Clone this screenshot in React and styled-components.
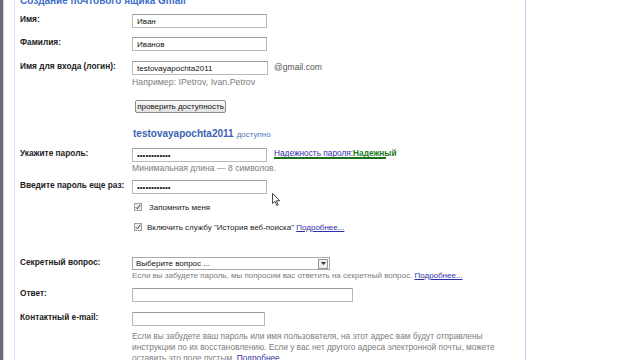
import React from "react";
import styled, { createGlobalStyle } from "styled-components";

const GlobalStyle = createGlobalStyle`
  html, body { margin: 0; padding: 0; background: #ffffff; }
  body { font-family: "Liberation Sans", Arial, sans-serif; overflow: hidden; }
`;

const Page = styled.div`
  position: relative;
  display: flex;
  width: 640px;
  height: 360px;
  overflow: hidden;
  background: #fff;
`;

const LeftBar = styled.div`
  width: 3px;
  flex: none;
  background: #6b6b78;
  border-right: 1px solid #cfd0d8;
`;

const Panel = styled.div`
  margin-left: 10px;
  width: 505px;
  flex: none;
  border-left: 1px solid #dbe6f5;
  border-right: 1px solid #bcd0ec;
  padding-left: 5px;
  display: flex;
  flex-direction: column;
`;

const Title = styled.div`
  margin-top: -5px;
  font-size: 10px;
  line-height: 12px;
  font-weight: bold;
  color: #3d6fc9;
  white-space: nowrap;
`;

const Row = styled.div`
  display: flex;
  align-items: flex-start;
  margin-top: ${(p) => p.$mt || 0}px;
`;

const Label = styled.div`
  width: 112px;
  flex: none;
  font-size: 8.3px;
  line-height: 10px;
  font-weight: bold;
  color: #222;
  white-space: nowrap;
`;

const Field = styled.div`
  display: flex;
  flex-direction: column;
  align-items: flex-start;
`;

const Inline = styled.div`
  display: flex;
  align-items: ${(p) => p.$align || "center"};
`;

const Input = styled.input`
  box-sizing: border-box;
  width: ${(p) => p.$w || 135}px;
  height: 14px;
  margin: 0;
  padding: 0 4px;
  border: 1px solid #b8b8b8;
  border-top-color: #9c9c9c;
  background: #fff;
  font-family: "Liberation Sans", Arial, sans-serif;
  font-size: 8px;
  color: #111;
  outline: none;
`;

const Hint = styled.div`
  margin-top: ${(p) => p.$mt || 0}px;
  font-size: ${(p) => p.$size || 8}px;
  line-height: ${(p) => p.$lh || 10}px;
  color: #7d7d7d;
  white-space: nowrap;
`;

const Link = styled.span`
  color: #2f2fa8;
  text-decoration: underline;
`;

const Domain = styled.span`
  font-size: 8.6px;
  color: #555;
  margin-left: 6px;
  margin-top: 1px;
`;

const CheckButton = styled.div`
  margin-left: 3px;
  box-sizing: border-box;
  width: 91px;
  height: 13px;
  border: 1px solid #8a8a8a;
  border-radius: 2px;
  background: linear-gradient(#fbfbfb, #e2e2e2);
  font-size: 8px;
  line-height: 11px;
  text-align: center;
  color: #111;
  white-space: nowrap;
`;

const Available = styled.div`
  margin-left: 1px;
  font-size: 10px;
  line-height: 12px;
  font-weight: bold;
  color: #3b62b3;
  white-space: nowrap;
`;

const AvailSmall = styled.span`
  font-size: 8px;
  font-weight: normal;
  color: #4f74bd;
  margin-left: 3px;
`;

const Strength = styled.div`
  margin-left: 7px;
  display: flex;
  flex-direction: column;
  align-items: flex-start;
  font-size: 8.3px;
  line-height: 10px;
  white-space: nowrap;
`;

const StrengthValue = styled.span`
  color: #1c7a22;
  font-weight: bold;
`;

const StrengthBar = styled.div`
  width: 112px;
  height: 2px;
  background: #1d6e1d;
  margin-top: -1px;
`;

const CheckLine = styled.div`
  display: flex;
  align-items: center;
  margin-left: 2px;
  height: 10px;
  font-size: 8px;
  color: #222;
  white-space: nowrap;
`;

const Box = styled.span`
  box-sizing: border-box;
  width: 8px;
  height: 8px;
  border: 1px solid #a0a0a0;
  background: #ececec;
  margin-right: ${(p) => p.$gap || 7}px;
  display: flex;
  align-items: center;
  justify-content: center;
`;

const Select = styled.div`
  box-sizing: border-box;
  width: 198px;
  height: 13px;
  border: 1px solid #a8a8a8;
  background: #fff;
  display: flex;
  align-items: center;
  justify-content: space-between;
  padding-left: 3px;
  font-size: 8px;
  color: #111;
`;

const SelectArrow = styled.span`
  box-sizing: border-box;
  width: 10px;
  height: 10px;
  margin-right: 1px;
  border: 1px solid #9a9a9a;
  background: #eee;
  display: flex;
  align-items: center;
  justify-content: center;
`;

const Cursor = styled.svg`
  position: absolute;
  left: 272px;
  top: 193px;
`;

const Tick = () => (
  <svg width="6" height="6" viewBox="0 0 6 6">
    <path d="M0.8 3.2 L2.4 4.8 L5.2 0.8" fill="none" stroke="#444" strokeWidth="1" />
  </svg>
);

export default function App() {
  return (
    <>
      <GlobalStyle />
      <Page>
        <LeftBar />
        <Panel>
          <Title>Создание почтового ящика Gmail</Title>

          <Row $mt={7}>
            <Label>Имя:</Label>
            <Input readOnly defaultValue="Иван" />
          </Row>

          <Row $mt={9}>
            <Label>Фамилия:</Label>
            <Input readOnly defaultValue="Иванов" />
          </Row>

          <Row $mt={10}>
            <Label>Имя для входа (логин):</Label>
            <Field>
              <Inline $align="flex-start">
                <Input readOnly defaultValue="testovayapochta2011" $w={136} />
                <Domain>@gmail.com</Domain>
              </Inline>
              <Hint $mt={2} $size={8.8}>Например: IPetrov, Ivan.Petrov</Hint>
              <Row $mt={13}>
                <CheckButton>проверить доступность</CheckButton>
              </Row>
              <Row $mt={15}>
                <Available>
                  testovayapochta2011<AvailSmall>доступно</AvailSmall>
                </Available>
              </Row>
            </Field>
          </Row>

          <Row $mt={7}>
            <Label>Укажите пароль:</Label>
            <Field>
              <Inline $align="flex-start">
                <Input readOnly type="password" defaultValue="qwerty123456" />
                <Strength>
                  <span>
                    <Link>Надежность пароля:</Link>
                    <StrengthValue>Надежный</StrengthValue>
                  </span>
                  <StrengthBar />
                </Strength>
              </Inline>
              <Hint $mt={1} $size={8.6}>Минимальная длина — 8 символов.</Hint>
            </Field>
          </Row>

          <Row $mt={7}>
            <Label>Введите пароль еще раз:</Label>
            <Field>
              <Input readOnly type="password" defaultValue="qwerty123456" />
              <Row $mt={8}>
                <CheckLine>
                  <Box $gap={7}>
                    <Tick />
                  </Box>
                  Запомнить меня
                </CheckLine>
              </Row>
              <Row $mt={10}>
                <CheckLine>
                  <Box $gap={5}>
                    <Tick />
                  </Box>
                  Включить службу "История веб-поиска"&nbsp;<Link>Подробнее...</Link>
                </CheckLine>
              </Row>
            </Field>
          </Row>

          <Row $mt={25}>
            <Label>Секретный вопрос:</Label>
            <Field>
              <Select>
                Выберите вопрос ...
                <SelectArrow>
                  <svg width="5" height="3" viewBox="0 0 5 3">
                    <path d="M0 0 H5 L2.5 3 Z" fill="#333" />
                  </svg>
                </SelectArrow>
              </Select>
              <Hint $mt={1}>
                Если вы забудете пароль, мы попросим вас ответить на секретный вопрос. <Link>Подробнее...</Link>
              </Hint>
            </Field>
          </Row>

          <Row $mt={7}>
            <Label>Ответ:</Label>
            <Input readOnly defaultValue="" $w={221} />
          </Row>

          <Row $mt={10}>
            <Label>Контактный e-mail:</Label>
            <Field>
              <Input readOnly defaultValue="" $w={133} />
              <Hint $mt={5} $lh={11} $size={8.3}>
                Если вы забудете ваш пароль или имя пользователя, на этот адрес вам будут отправлены
                <br />
                инструкции по их восстановлению. Если у вас нет другого адреса электронной почты, можете
                <br />
                оставить это поле пустым. <Link>Подробнее...</Link>
              </Hint>
            </Field>
          </Row>
        </Panel>
        <Cursor width="9" height="14" viewBox="0 0 9 14">
          <path d="M0.5 0.5 L0.5 10.5 L3 8.2 L4.8 12.5 L6.2 11.9 L4.5 7.7 L7.8 7.7 Z" fill="#fff" stroke="#333" strokeWidth="0.9" strokeLinejoin="round" />
        </Cursor>
      </Page>
    </>
  );
}
